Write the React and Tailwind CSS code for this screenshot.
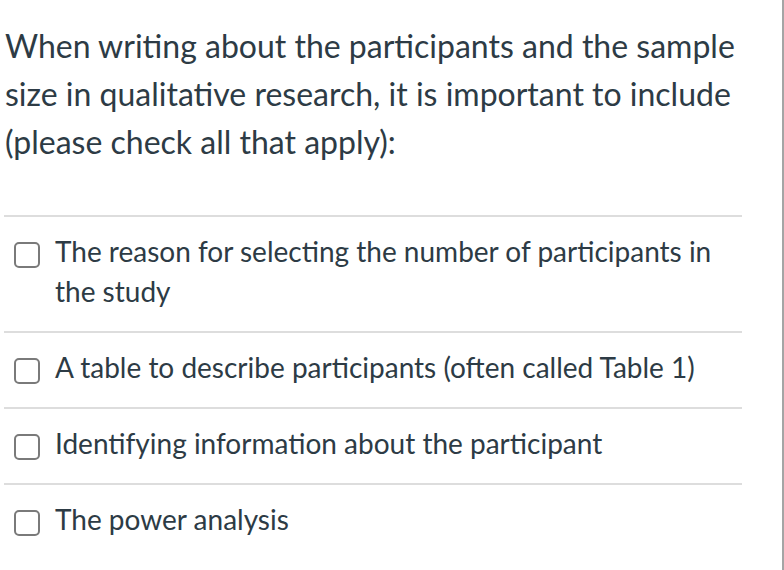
import React from 'react';

const options = [
  'The reason for selecting the number of participants in the study',
  'A table to describe participants (often called Table 1)',
  'Identifying information about the participant',
  'The power analysis',
];

const App = () => {
  return (
    <div className="w-[784px] h-[570px] bg-white flex overflow-hidden font-['Lato',sans-serif] text-[#2d3b45]">
      <div className="flex-1 flex flex-col">
        {/* Texte de la question */}
        <div className="pl-[5px] w-[750px] pt-[22px] text-[32px] leading-[48px]">
          When writing about the participants and the sample size in qualitative research, it is important to include (please check all that apply):
        </div>

        <div className="mt-[49px] ml-[4px] w-[738px] flex flex-col">
          {options.map((opt) => (
            <div key={opt} className="border-t-2 border-[#dddddd] flex items-start gap-[15px] pl-[10px] pt-[14px] pb-[20px]">
              <span className="mt-[11px] w-[26px] h-[26px] shrink-0 border-2 border-[#7a7a7a] rounded-[5px] bg-white" />
              <span className="text-[28px] leading-[40px] pr-[4px]">{opt}</span>
            </div>
          ))}
        </div>
      </div>
      <div className="w-[2px] h-full bg-[#a5a5a5]" />
    </div>
  );
};

export default App;
